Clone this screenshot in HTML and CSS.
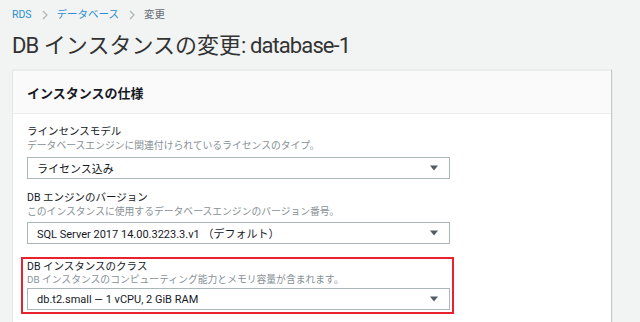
FILE: index.html
```html
<!DOCTYPE html>
<html lang="ja">
<head>
<meta charset="utf-8">
<title>DB インスタンスの変更</title>
<link rel="stylesheet" href="styles.css">
</head>
<body>
<div class="page">
  <nav class="crumbs">
    <a class="crumb-link">RDS</a>
    <span class="sep"><svg width="6" height="10" viewBox="0 0 6 10"><path d="M1 1 L5 5 L1 9" fill="none" stroke="#aab7b8" stroke-width="1.2"/></svg></span>
    <a class="crumb-link">データベース</a>
    <span class="sep"><svg width="6" height="10" viewBox="0 0 6 10"><path d="M1 1 L5 5 L1 9" fill="none" stroke="#aab7b8" stroke-width="1.2"/></svg></span>
    <span class="crumb-current">変更</span>
  </nav>
  <h1 class="title"><span class="lat">DB</span> インスタンスの変更<span class="lat">: database-1</span></h1>
  <section class="card">
    <header class="card-head">インスタンスの仕様</header>
    <div class="card-body">
      <div class="field f1">
        <div class="label">ラインセンスモデル</div>
        <div class="desc">データベースエンジンに関連付けられているライセンスのタイプ。</div>
        <div class="select"><span>ライセンス込み</span><svg class="caret" width="8" height="6" viewBox="0 0 8 6"><path d="M0 0.5 H8 L4 5.5 Z" fill="#545b64"/></svg></div>
      </div>
      <div class="field f2">
        <div class="label"><span class="lat">DB</span> エンジンのバージョン</div>
        <div class="desc">このインスタンスに使用するデータベースエンジンのバージョン番号。</div>
        <div class="select"><span><span class="lat">SQL Server 2017 14.00.3223.3.v1</span> （デフォルト）</span><svg class="caret" width="8" height="6" viewBox="0 0 8 6"><path d="M0 0.5 H8 L4 5.5 Z" fill="#545b64"/></svg></div>
      </div>
      <div class="field f3 highlight">
        <div class="label"><span class="lat">DB</span> インスタンスのクラス</div>
        <div class="desc"><span class="lat">DB</span> インスタンスのコンピューティング能力とメモリ容量が含まれます。</div>
        <div class="select"><span class="lat">db.t2.small — 1 vCPU, 2 GiB RAM</span><svg class="caret" width="8" height="6" viewBox="0 0 8 6"><path d="M0 0.5 H8 L4 5.5 Z" fill="#545b64"/></svg></div>
      </div>
    </div>
  </section>
</div>
</body>
</html>
```
FILE: styles.css
```css
html, body {
  margin: 0;
  padding: 0;
  background: #f2f3f3;
  font-family: Roboto, "Noto Sans CJK JP", sans-serif;
  color: #16191f;
}
.page {
  padding: 8px 29px 0 12px;
  height: 322px;
  box-sizing: border-box;
  overflow: hidden;
}
.crumbs {
  display: flex;
  align-items: center;
  height: 14px;
  font-size: 10.5px;
  line-height: 14px;
}
.crumb-link {
  color: #2b8fd1;
}
.sep {
  display: flex;
  align-items: center;
  margin: 0 9px 0 10px;
}
.crumb-current {
  color: #687078;
}
.title {
  margin: 10px 0 0 0;
  font-size: 22px;
  line-height: 28px;
  font-weight: 400;
  color: #333;
}
.title .lat {
  letter-spacing: -0.9px;
}
.card {
  margin-top: 10px;
  background: #fff;
  border-left: 1px solid #e3e6e6;
  border-top: 1px solid #eaeded;
  box-shadow: 1px 0 1px 0 rgba(0, 28, 36, 0.2);
  height: 260px;
}
.card-head {
  height: 43px;
  box-sizing: border-box;
  padding: 0 14px;
  display: flex;
  align-items: center;
  background: #fafafa;
  border-bottom: 1px solid #eaeded;
  font-size: 13px;
  font-weight: 700;
  color: #16191f;
}
.card-body {
  padding: 11px 0 0 14px;
}
.field {
  width: 423px;
}
.label {
  font-size: 10.5px;
  line-height: 14px;
  color: #16191f;
}
.desc {
  font-size: 9.8px;
  line-height: 13px;
  color: #879196;
}
.select {
  margin-top: 5px;
  height: 22px;
  box-sizing: border-box;
  border: 1px solid #aab7b8;
  background: #fff;
  display: flex;
  align-items: center;
  justify-content: space-between;
  padding: 0 11px 0 9px;
  font-size: 11px;
  color: #16191f;
}
.f2 {
  margin-top: 12px;
}
.f2 .select {
  margin-top: 4px;
}
.highlight {
  margin: 13px 0 0 -6px;
  padding: 2px 2px 2px 4px;
  border: 2px solid #e8232f;
}
.highlight .label {
  line-height: 12px;
}
.highlight .select {
  margin-top: 2px;
}
.caret {
  display: block;
}
```
